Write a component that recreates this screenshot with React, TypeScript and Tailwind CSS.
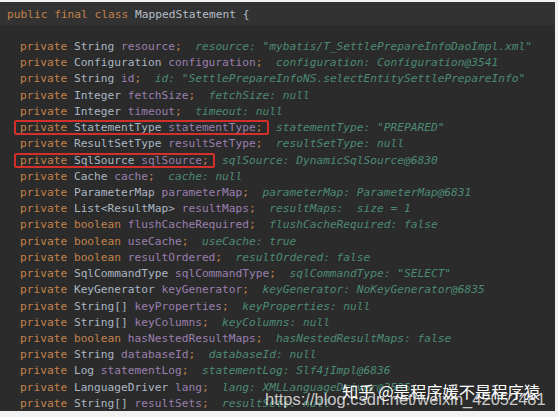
import React from "react";

type Field = {
  type: string;
  name: string;
  value: string;
  kwType?: boolean;
  box?: boolean;
};

const fields: Field[] = [
  { type: "String", name: "resource", value: 'resource: "mybatis/T_SettlePrepareInfoDaoImpl.xml"' },
  { type: "Configuration", name: "configuration", value: "configuration: Configuration@3541" },
  { type: "String", name: "id", value: 'id: "SettlePrepareInfoNS.selectEntitySettlePrepareInfo"' },
  { type: "Integer", name: "fetchSize", value: "fetchSize: null" },
  { type: "Integer", name: "timeout", value: "timeout: null" },
  { type: "StatementType", name: "statementType", value: 'statementType: "PREPARED"', box: true },
  { type: "ResultSetType", name: "resultSetType", value: "resultSetType: null" },
  { type: "SqlSource", name: "sqlSource", value: "sqlSource: DynamicSqlSource@6830", box: true },
  { type: "Cache", name: "cache", value: "cache: null" },
  { type: "ParameterMap", name: "parameterMap", value: "parameterMap: ParameterMap@6831" },
  { type: "List<ResultMap>", name: "resultMaps", value: "resultMaps:  size = 1" },
  { type: "boolean", name: "flushCacheRequired", value: "flushCacheRequired: false", kwType: true },
  { type: "boolean", name: "useCache", value: "useCache: true", kwType: true },
  { type: "boolean", name: "resultOrdered", value: "resultOrdered: false", kwType: true },
  { type: "SqlCommandType", name: "sqlCommandType", value: 'sqlCommandType: "SELECT"' },
  { type: "KeyGenerator", name: "keyGenerator", value: "keyGenerator: NoKeyGenerator@6835" },
  { type: "String[]", name: "keyProperties", value: "keyProperties: null" },
  { type: "String[]", name: "keyColumns", value: "keyColumns: null" },
  { type: "boolean", name: "hasNestedResultMaps", value: "hasNestedResultMaps: false", kwType: true },
  { type: "String", name: "databaseId", value: "databaseId: null" },
  { type: "Log", name: "statementLog", value: "statementLog: Slf4jImpl@6836" },
  { type: "LanguageDriver", name: "lang", value: "lang: XMLLanguageDriver@3535" },
  { type: "String[]", name: "resultSets", value: "resultSets: null" },
];

const FieldLine = ({ f }: { f: Field }) => {
  const code = (
    <>
      <span className="text-[#c4824a]">private </span>
      <span className={f.kwType ? "text-[#c4824a]" : "text-[#aab6c2]"}>{f.type} </span>
      <span className="text-[#9a7fae]">{f.name}</span>
      <span className="text-[#c4824a]">;</span>
    </>
  );
  return (
    <div className="h-[16.23px] leading-[16.23px] whitespace-pre">
      {f.box ? (
        <span className="relative">
          {code}
          <span className="absolute -left-[6px] -right-[6px] -top-[1px] -bottom-[1px] rounded-[2px] border-2 border-[#d4302b]" />
        </span>
      ) : (
        code
      )}
      <span className="italic text-[#4b8a73]">{"  " + f.value}</span>
    </div>
  );
};

export default function App() {
  return (
    <div className="relative h-[417px] w-[558px] overflow-hidden bg-[#f2f2f2] pt-[2px] pr-[3px] pb-[6px] font-['DejaVu_Sans_Mono',monospace] text-[11.2px]">
      <div className="flex h-full flex-col overflow-hidden bg-[#2b2b2b]">
        <div className="h-[23px] shrink-0 bg-[#323232] pl-[7px] pt-[1px] leading-[23px] whitespace-pre">
          <span className="text-[#c4824a]">public final class </span>
          <span className="text-[#b4bec8]">MappedStatement {"{"}</span>
        </div>
        <div className="pl-[20px] pt-[14px]">
          {fields.map((f) => (
            <FieldLine key={f.name} f={f} />
          ))}
        </div>
      </div>

      {/* watermarks laid over the code */}
      <div className="absolute left-[342px] top-[379px] whitespace-nowrap font-['Noto_Sans_CJK_SC',sans-serif] text-[16.3px] leading-[24px] text-white">
        知乎 @是程序媛不是程序猿
      </div>
      <div className="absolute left-[265px] top-[389px] whitespace-nowrap font-['Liberation_Sans',sans-serif] text-[16.5px] leading-[20px] text-white/75">
        https://blog.csdn.net/weixin_42052481
      </div>
    </div>
  );
}
